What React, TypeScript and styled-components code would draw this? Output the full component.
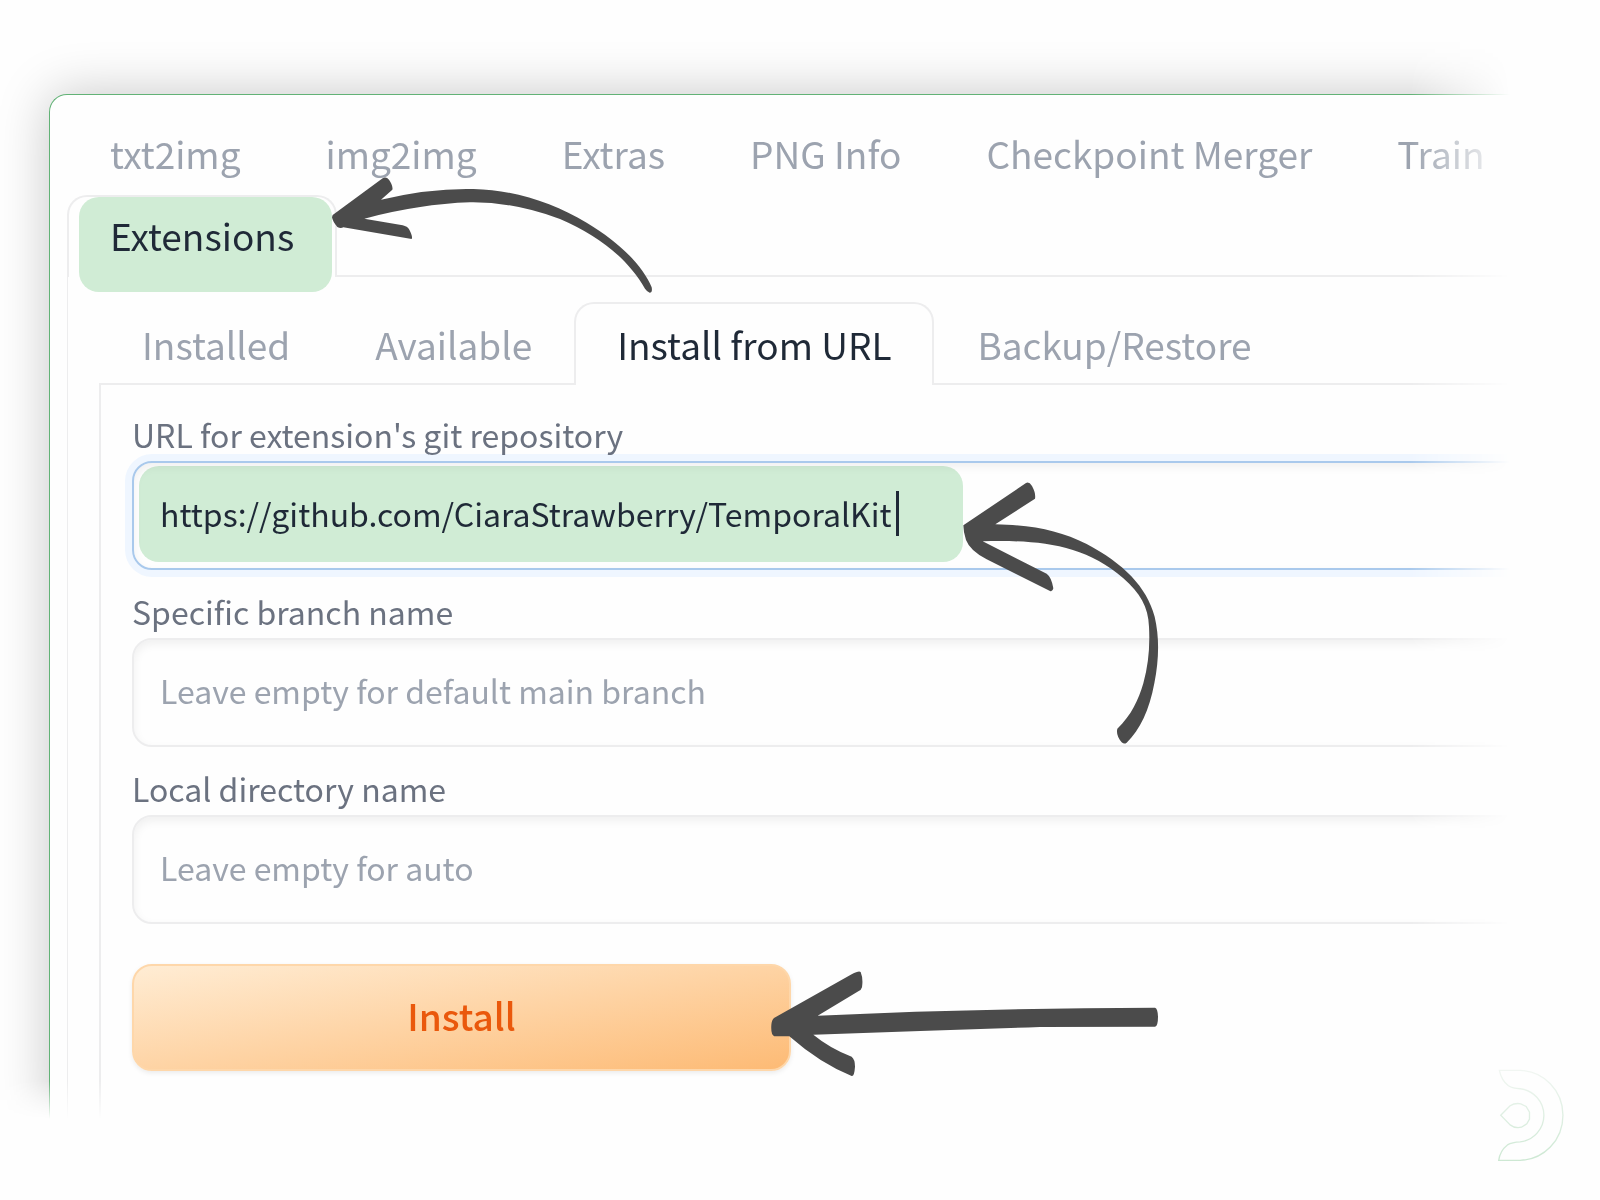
import React, { useState } from "react";
import styled, { createGlobalStyle, css } from "styled-components";

const GlobalStyle = createGlobalStyle`
  *, *::before, *::after { box-sizing: border-box; }
  body { margin: 0; background: #fefefe; }
  body, button, input {
    font-family: "Noto Sans CJK SC", "Source Sans Pro", "Noto Sans", sans-serif;
  }
`;

const line = "#ededee";
const ink = "#4b4b4b";
const mint = "#d0ecd5";

const Page = styled.div`
  position: relative;
  min-height: 100vh;
  overflow: hidden;
`;

const FadeFrame = styled.main`
  padding: 94px 0 0 49px;
  mask-image: linear-gradient(to right, #000 calc(100% - 190px), transparent calc(100% - 90px)),
    linear-gradient(to bottom, #000 calc(100% - 38px), transparent);
  mask-composite: intersect;
`;

const Panel = styled.section`
  padding: 18px 32px 0 17px;
  border: 1px solid #62b276;
  border-width: 1px 0 0 1px;
  border-top-left-radius: 18px;
  background: #fefefe;
  box-shadow: 0 0 52px rgba(0, 0, 0, 0.22);
`;

const Strip = styled.div`
  display: flex;
  flex-wrap: wrap;
`;

const Rule = styled.div`
  flex: 1;
  border-bottom: 2px solid ${line};
`;

const Tab = styled.button<{ $active?: boolean; $ruled?: boolean }>`
  position: relative;
  height: ${(p) => (p.$ruled ? 83 : 82)}px;
  padding: ${(p) => (p.$ruled ? "2px 42px 0 43px" : "0 42px 2px 43px")};
  border: 0 solid ${line};
  border-bottom-width: ${(p) => (p.$ruled ? 2 : 0)}px;
  background: none;
  color: #9ca3af;
  font-size: 37px;
  line-height: 48px;
  white-space: nowrap;
  cursor: pointer;
  ${(p) =>
    p.$active &&
    css`
      padding: 0 41px ${p.$ruled ? 2 : 4}px;
      border-width: 2px 2px 0;
      border-radius: 20px 20px 0 0;
      color: #1f2937;
    `}
`;

const TabText = styled.span`
  position: relative;
`;

const Mark = styled.span`
  position: absolute;
  border-radius: 20px;
  background: ${mint};
`;

const TabMark = styled(Mark)`
  inset: 0 3px -15px 10px;
`;

const FieldMark = styled(Mark)`
  top: 5px;
  left: 7px;
  width: 824px;
  height: 96px;
`;

const Caret = styled.span`
  position: absolute;
  top: 25px;
  right: 64px;
  width: 3px;
  height: 45px;
  background: #1f2937;
`;

const Arrow = styled.svg<{ $x: number; $y: number }>`
  position: absolute;
  z-index: 2;
  left: ${(p) => p.$x}px;
  top: ${(p) => p.$y}px;
  fill: ${ink};
  pointer-events: none;
`;

const OuterBody = styled.div`
  padding: 25px 0 0 31px;
  border-left: 1px solid ${line};
`;

const InnerBody = styled.form`
  display: flex;
  flex-direction: column;
  padding: 28px 0 48px 31px;
  border-left: 2px solid ${line};
`;

const Field = styled.div`
  display: flex;
  flex-direction: column;
  margin-bottom: 20px;
`;

const Label = styled.label`
  position: relative;
  z-index: 1;
  margin-bottom: 6px;
  color: #6b7280;
  font-size: 32px;
  line-height: 42px;
`;

const InputWrap = styled.div`
  position: relative;
  display: flex;
`;

const Input = styled.input<{ $focused?: boolean }>`
  position: relative;
  flex: 1;
  min-width: 0;
  height: 109px;
  padding: 0 26px 6px;
  border: 2px solid ${(p) => (p.$focused ? "#a9c9ec" : line)};
  border-radius: 20px;
  outline: none;
  background: transparent;
  box-shadow: ${(p) => (p.$focused ? "0 0 0 7px #eff6ff, " : "")}inset 0 4px 10px rgba(0, 0, 0, 0.06);
  color: #1f2937;
  font-size: 32px;
  &::placeholder {
    color: #9ca3af;
    opacity: 1;
  }
`;

const ButtonWrap = styled.div`
  position: relative;
  width: 659px;
  max-width: 100%;
  margin-top: 20px;
`;

const InstallButton = styled.button`
  display: block;
  width: 100%;
  height: 107px;
  padding: 0 0 6px;
  border: 2px solid #fed7aa;
  border-radius: 20px;
  background: linear-gradient(to bottom right, #ffedd5, #fdba74) border-box;
  box-shadow: 0 2px 5px rgba(0, 0, 0, 0.08);
  color: #ea580c;
  font-size: 37px;
  font-weight: 500;
  line-height: 48px;
  cursor: pointer;
`;

const Logo = styled.svg`
  position: absolute;
  right: 33px;
  bottom: 36px;
`;

const mainTabs = ["txt2img", "img2img", "Extras", "PNG Info", "Checkpoint Merger", "Train"];
const subTabs = ["Installed", "Available", "Install from URL", "Backup/Restore"];

export default function App() {
  const [url, setUrl] = useState("https://github.com/CiaraStrawberry/TemporalKit");
  return (
    <Page>
      <GlobalStyle />
      <FadeFrame>
        <Panel>
          <Strip>
            {mainTabs.map((name) => (
              <Tab key={name} type="button">
                {name}
              </Tab>
            ))}
            <Tab type="button" $active>
              <TabMark />
              <TabText>Extensions</TabText>
              <Arrow $x={251} $y={-37} width="350" height="150" viewBox="0 0 1050 450" aria-hidden="true">
                <path d="M38 165 L188 55 Q198 48 207 59 Q220 78 217 89 L183 119 Q330 84 460 87 C590 90 700 130 800 188 C900 247 970 320 995 382 Q998 398 989 398 Q982 396 975 386 C920 290 830 225 720 177 Q580 125 450 127 Q300 132 133 176 L248 196 Q262 199 268 209 Q279 230 275 237 L70 202 Q62 207 52 201 Q38 185 36 172 Z" />
              </Arrow>
            </Tab>
            <Rule />
          </Strip>
          <OuterBody>
            <Strip>
              {subTabs.map((name) => (
                <Tab key={name} type="button" $ruled $active={name === "Install from URL"}>
                  {name}
                </Tab>
              ))}
              <Rule />
            </Strip>
            <InnerBody onSubmit={(e) => e.preventDefault()}>
              <Field>
                <Label htmlFor="url">URL for extension's git repository</Label>
                <InputWrap>
                  <FieldMark>
                    <Caret />
                  </FieldMark>
                  <Input id="url" $focused value={url} onChange={(e) => setUrl(e.target.value)} />
                  <Arrow $x={728} $y={-21} width="340" height="320" viewBox="0 0 1020 960" aria-hidden="true">
                    <path d="M310 256 L498 129 Q507 124 516 138 Q528 160 525 176 L406 253 C520 255 600 272 680 312 C790 370 860 440 884 530 Q905 620 883 730 C868 810 840 870 800 908 Q793 914 785 907 Q767 885 772 866 C815 825 835 780 850 730 Q872 650 867 560 C865 500 840 460 790 415 C670 310 530 300 368 304 L560 401 Q575 412 580 445 Q578 456 570 453 L380 358 Q330 332 318 300 Q310 275 310 256 Z" />
                  </Arrow>
                </InputWrap>
              </Field>
              <Field>
                <Label htmlFor="branch">Specific branch name</Label>
                <InputWrap>
                  <Input id="branch" placeholder="Leave empty for default main branch" />
                </InputWrap>
              </Field>
              <Field>
                <Label htmlFor="directory">Local directory name</Label>
                <InputWrap>
                  <Input id="directory" placeholder="Leave empty for auto" />
                </InputWrap>
              </Field>
              <ButtonWrap>
                <InstallButton type="submit">Install</InstallButton>
                <Arrow $x={608} $y={-24} width="440" height="160" viewBox="0 0 1320 480" aria-hidden="true">
                  <path d="M102 234 L335 103 Q357 91 362 96 Q370 116 366 142 Q364 150 355 154 L233 227 Q700 205 1245 203 Q1253 204 1254 230 Q1254 258 1245 260 L900 261 Q560 272 220 284 Q270 325 335 350 Q345 358 345 380 Q343 410 335 408 Q240 370 148 289 L103 289 Q92 285 94 255 Q95 240 102 234 Z" />
                </Arrow>
              </ButtonWrap>
            </InnerBody>
          </OuterBody>
        </Panel>
      </FadeFrame>
      <Logo width="72" height="97" viewBox="105 80 215 290" fill="none" strokeWidth="4" aria-hidden="true">
        <defs>
          <linearGradient id="leaf" x1="0" y1="90" x2="0" y2="360" gradientUnits="userSpaceOnUse">
            <stop offset="0" stopColor="#f1f6f2" />
            <stop offset="1" stopColor="#cde8d3" />
          </linearGradient>
        </defs>
        <path
          stroke="url(#leaf)"
          d="M118 90 H180 C250 92 308 150 308 224 C308 300 250 357 180 359 H116 Q120 330 142 313 Q156 305 180 304 A80 80 0 0 0 180 145 Q158 144 145 136 Q124 120 118 90 Z"
        />
        <path
          stroke="url(#leaf)"
          d="M122 224 L150 196 Q164 187 182 190 L198 198 L208 215 V236 L200 250 L184 260 Q164 264 150 253 Z"
        />
      </Logo>
    </Page>
  );
}
